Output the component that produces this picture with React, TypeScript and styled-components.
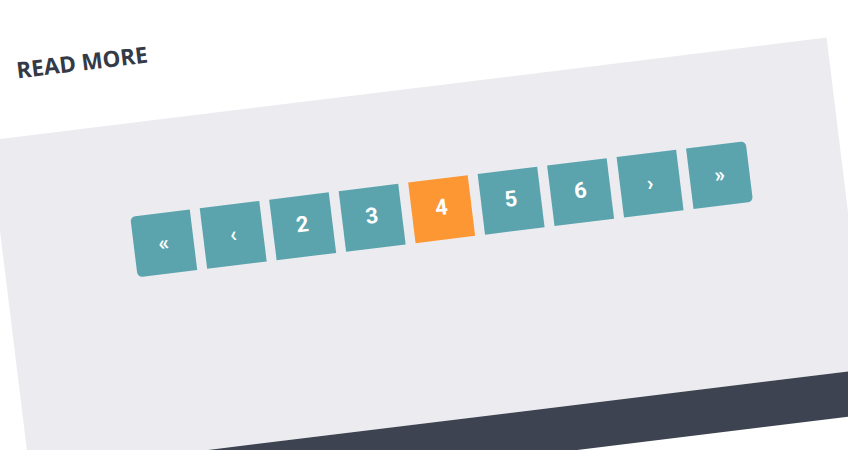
import React from "react";
import styled, { createGlobalStyle } from "styled-components";

const GlobalStyle = createGlobalStyle`
  html, body {
    margin: 0;
    padding: 0;
    background: #ffffff;
    overflow: hidden;
  }
`;

const Stage = styled.div`
  width: 848px;
  height: 450px;
  overflow: hidden;
  background: #ffffff;
`;

/* The whole page section is shown tilted on the canvas */
const Tilted = styled.section`
  width: 844px;
  transform-origin: 0 0;
  transform: translate(-21px, 60px) rotate(-7deg);
`;

const Heading = styled.h2`
  margin: 0 0 51px;
  padding-left: 36px;
  font-family: "Open Sans", "Liberation Sans", sans-serif;
  font-weight: 700;
  font-size: 22.5px;
  line-height: 30px;
  color: #343a46;
  text-transform: uppercase;
`;

const Panel = styled.div`
  box-sizing: border-box;
  height: 334px;
  background: #ececf0;
  padding: 93px 0 0 131px;
`;

const Pager = styled.ul`
  display: flex;
  gap: 10px;
  list-style: none;
  margin: 0;
  padding: 0;
`;

const PageLink = styled.li<{ $active?: boolean; $arrow?: boolean }>`
  width: 60px;
  height: 61px;
  display: flex;
  align-items: center;
  justify-content: center;
  background: ${(p) => (p.$active ? "#fd9733" : "#5ba4ae")};
  color: #ffffff;
  font-family: Roboto, "Liberation Sans", sans-serif;
  font-weight: 700;
  font-size: ${(p) => (p.$arrow ? "21px" : "22px")};
  line-height: 1;
  padding-bottom: ${(p) => (p.$arrow ? "0" : "3px")};
  box-sizing: border-box;

  &:first-child {
    border-radius: 5px 0 0 5px;
  }
  &:last-child {
    border-radius: 0 5px 5px 0;
  }
`;

const Footer = styled.div`
  height: 45px;
  background: #3d4350;
`;

const pages: { label: string; arrow?: boolean; active?: boolean }[] = [
  { label: "«", arrow: true },
  { label: "‹", arrow: true },
  { label: "2" },
  { label: "3" },
  { label: "4", active: true },
  { label: "5" },
  { label: "6" },
  { label: "›", arrow: true },
  { label: "»", arrow: true },
];

export default function App() {
  return (
    <Stage>
      <GlobalStyle />
      <Tilted>
        <Heading>Read More</Heading>
        <Panel>
          <Pager>
            {pages.map((p, i) => (
              <PageLink key={i} $active={p.active} $arrow={p.arrow}>
                {p.label}
              </PageLink>
            ))}
          </Pager>
        </Panel>
        <Footer />
      </Tilted>
    </Stage>
  );
}
